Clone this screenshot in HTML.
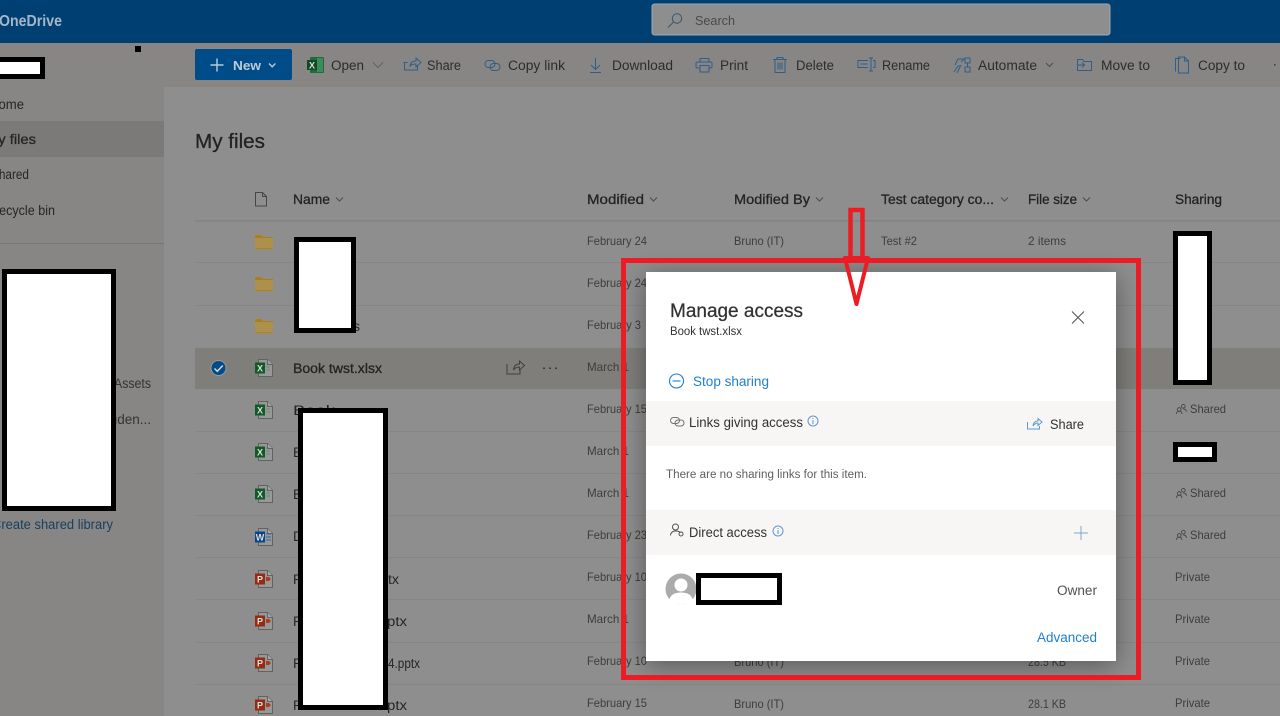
<!DOCTYPE html>
<html><head><meta charset="utf-8"><title>My files - OneDrive</title>
<style>
html,body{margin:0;padding:0;width:1280px;height:716px;overflow:hidden;background:#8e8e8e}
svg{display:block}
text{font-family:"Liberation Sans",sans-serif;font-size:13.5px;fill:#262525}
.m{stroke:#262525;stroke-width:.3}
.tb{fill:#2c2c2c}
.d{font-size:12px;fill:#3e3d3c}
.b{font-size:13.5px;fill:#242323;stroke:#242323;stroke-width:.3}
.i{fill:none;stroke:#2f5f88;stroke-width:1}
.g{fill:none;stroke:#404040;stroke-width:1}
.k{font-size:9px;font-weight:bold;fill:#ddd;text-anchor:middle}
.l{stroke:#868686;stroke-width:1}
.dt{fill:#323130}
.dg{fill:#605e5c}
.bl{fill:#1f80d0}
.di{fill:none;stroke:#5f98d2;stroke-width:1}
.r{fill:#fff;stroke:#000;stroke-width:5}
</style></head><body>
<svg width="1280" height="716" viewBox="0 0 1280 716" xmlns="http://www.w3.org/2000/svg">
<defs>
<filter id="sh" x="-20%" y="-20%" width="140%" height="140%"><feGaussianBlur stdDeviation="13"/></filter>
<symbol id="pg" viewBox="0 0 18 18"><path d="M3.500.5h9l5 5v12h-14z" fill="#989898" stroke="#626262"/><path d="M12.500.5v5h5" fill="#a8a8a8" stroke="#626262"/></symbol>
<symbol id="fo" viewBox="0 0 18 14"><path d="M0 1.500Q0 0 1.500 0H6l2 2h10v12H0z" fill="#ab8018"/><rect y="3" width="18" height="10.200" fill="#ad914a"/><rect y="13" width="18" height="1" fill="#bb7f12"/></symbol>
<symbol id="sr" viewBox="0 0 12 12"><circle cx="3.500" cy="6.500" r="2" fill="none" stroke="#484848"/><path d="M.5 11.500q0-3 3-3t3 3" fill="none" stroke="#484848"/><circle cx="8" cy="3" r="2" fill="none" stroke="#484848"/><path d="M8 6q3 0 3.500 3" fill="none" stroke="#484848"/></symbol>
</defs>

<!-- frame -->
<rect width="1280" height="716" fill="#8e8e8e"/>
<rect y="0" width="1280" height="43" fill="#003f72"/>
<rect y="43" width="164" height="673" fill="#878685"/>
<rect y="43" width="1280" height="44" fill="#878685"/>
<text x="-1" y="26" textLength="63" lengthAdjust="spacingAndGlyphs" style="font-size:15.500px;fill:#a3b7c8;font-weight:bold">OneDrive</text>

<!-- search -->
<rect x="652" y="4" width="458" height="31" rx="2.500" fill="#8e8e8e" stroke="#9ba8b4"/>
<circle cx="677" cy="18.500" r="4.700" fill="none" stroke="#34566f" stroke-width="1"/><path d="M673.500 22l-5.500 5.500" stroke="#34566f" fill="none"/>
<text x="695" y="25" textLength="40" lengthAdjust="spacingAndGlyphs" style="fill:#4a4a4a;font-size:13px">Search</text>

<!-- sidebar -->
<rect x="135" y="46" width="6" height="6" fill="#000"/>
<rect y="121" width="164" height="36" fill="#7b7a79"/>
<text x="-11" y="109" textLength="35" lengthAdjust="spacingAndGlyphs">Home</text>
<text x="-14" y="144" textLength="50" lengthAdjust="spacingAndGlyphs" class="m">My files</text>
<text x="-9" y="179" textLength="38" lengthAdjust="spacingAndGlyphs">Shared</text>
<text x="-10" y="215" textLength="65" lengthAdjust="spacingAndGlyphs">Recycle bin</text>
<rect y="243" width="164" height="1" fill="#787776"/>
<text x="114" y="388" textLength="37" lengthAdjust="spacingAndGlyphs" style="fill:#333">Assets</text>
<text x="97" y="424" textLength="54" lengthAdjust="spacingAndGlyphs" style="fill:#333">Studen...</text>
<text x="-8" y="529" textLength="121" lengthAdjust="spacingAndGlyphs" style="fill:#18405f">Create shared library</text>

<!-- toolbar -->
<rect x="195" y="49" width="97" height="31" rx="2" fill="#004c88"/>
<path d="M217 58.500v13M210.500 65h13" stroke="#bccbd8" stroke-width="1.400" fill="none"/>
<text x="233" y="70" textLength="28" lengthAdjust="spacingAndGlyphs" style="fill:#bccbd8;font-weight:bold;font-size:13px">New</text>
<path d="M269 63.500l3.200 3.200 3.200-3.200" stroke="#bccbd8" stroke-width="1.400" fill="none"/>

<rect x="310" y="57" width="14" height="16" rx="1" fill="#226a3e"/><rect x="317" y="58" width="6" height="14" fill="#3d8a5a"/>
<rect x="307" y="60" width="10" height="10" fill="#104a26"/><text x="312" y="68.500" class="k">X</text>
<text x="331" y="70" textLength="33" lengthAdjust="spacingAndGlyphs" class="tb">Open</text>
<path d="M373 62.500l5 5 5-5" fill="none" stroke="#636363"/>

<path class="i" d="M405 63v7.500h13V66M404 63h4M410.500 66.500q.5-5 6-5V58.500l5 4.500-5 4.500V64.500q-4 0-6 2z" transform="translate(-.5 -.5)"/>
<text x="427" y="70" textLength="34" lengthAdjust="spacingAndGlyphs" class="tb">Share</text>

<rect class="i" x="485" y="60.500" width="10" height="7" rx="3.500"/><rect class="i" x="490" y="63.500" width="10" height="7" rx="3.500"/>
<text x="508" y="70" textLength="57" lengthAdjust="spacingAndGlyphs" class="tb">Copy link</text>

<path class="i" d="M595.500 58v11M591 65l4.500 4.500L600 65M590 72.500h11"/>
<text x="612" y="70" textLength="61" lengthAdjust="spacingAndGlyphs" class="tb">Download</text>

<path class="i" d="M699 68h-2.500a1.500 1.500 0 0 1-1.500-1.500v-3a1.500 1.500 0 0 1 1.500-1.500h13a1.500 1.500 0 0 1 1.500 1.500v3a1.500 1.500 0 0 1-1.500 1.500H708M699 62v-3.500h9V62M699 65.500h9v6.500h-9z" transform="translate(1 0)"/>
<text x="720" y="70" textLength="28" lengthAdjust="spacingAndGlyphs" class="tb">Print</text>

<path class="i" d="M773 60h14M777 60v-2h6v2M775 60v13h10V60M778 63v7M780 63v7M782 63v7" transform="translate(0 -.5)"/>
<text x="796" y="70" textLength="38" lengthAdjust="spacingAndGlyphs" class="tb">Delete</text>

<path class="i" d="M868 60.500h-10v7h10M860.500 64h7M871 58v13M869 58h4M869 71h4M873 60.500h2v7h-2"/>
<text x="882" y="70" textLength="48" lengthAdjust="spacingAndGlyphs" class="tb">Rename</text>

<path class="i" d="M955 65l3-6h6l-3 3M954 72l4-6h3M961 65l-4 8M965 58h5v5h-5zM965 67h5v5h-5zM967.500 63v4"/>
<text x="978" y="70" textLength="59" lengthAdjust="spacingAndGlyphs" class="tb">Automate</text>
<path d="M1046 63l3.500 3.500 3.500-3.500" fill="none" stroke="#4c4c4c"/>

<path class="i" d="M1077.500 59.500h5l1.500 2h7.500v9h-14zM1077.500 65h7M1082 62.500l2.500 2.500-2.500 2.500"/>
<text x="1101" y="70" textLength="49" lengthAdjust="spacingAndGlyphs" class="tb">Move to</text>

<path class="i" d="M1175.500 72V59h5M1178.500 57.500h6l4 4v12h-10zM1184.500 57.500v4h4" transform="translate(0 -.5)"/>
<text x="1198" y="70" textLength="47" lengthAdjust="spacingAndGlyphs" class="tb">Copy to</text>
<rect x="1274" y="64" width="1.500" height="1.500" fill="#3c3c3c"/>

<!-- title -->
<text x="195" y="148" textLength="70" lengthAdjust="spacingAndGlyphs" style="font-size:20px;fill:#222;stroke:#222;stroke-width:.3">My files</text>

<!-- table header -->
<path d="M255.500 192.500h7l4 4v9.500h-11zM262.500 192.500v4h4" fill="none" stroke="#464646"/>
<text x="293" y="204" textLength="37" lengthAdjust="spacingAndGlyphs" class="b">Name</text>
<path d="M336 197.500l3.500 3.500 3.500-3.500" fill="none" stroke="#4c4c4c"/>
<text x="587" y="204" textLength="57" lengthAdjust="spacingAndGlyphs" class="b">Modified</text>
<path d="M650 197.500l3.500 3.500 3.500-3.500" fill="none" stroke="#4c4c4c"/>
<text x="734" y="204" textLength="76" lengthAdjust="spacingAndGlyphs" class="b">Modified By</text>
<path d="M816 197.500l3.500 3.500 3.500-3.500" fill="none" stroke="#4c4c4c"/>
<text x="881" y="204" textLength="113" lengthAdjust="spacingAndGlyphs" class="b">Test category co...</text>
<path d="M1001 197.500l3.500 3.500 3.500-3.500" fill="none" stroke="#4c4c4c"/>
<text x="1028" y="204" textLength="49" lengthAdjust="spacingAndGlyphs" class="b">File size</text>
<path d="M1083 197.500l3.500 3.500 3.500-3.500" fill="none" stroke="#4c4c4c"/>
<text x="1175" y="204" textLength="47" lengthAdjust="spacingAndGlyphs" class="b">Sharing</text>

<!-- row lines -->
<rect x="195" y="220" width="1085" height="1.500" fill="#838383"/>
<path class="l" d="M195 262.500H1280M195 305.500H1280M195 431.500H1280M195 473.500H1280M195 515.500H1280M195 557.500H1280M195 599.500H1280M195 642.500H1280M195 684.500H1280"/>
<rect x="195" y="348" width="1085" height="41" fill="#7f7e7a"/>

<!-- row icons -->
<use href="#fo" x="255" y="235" width="18" height="14"/>
<use href="#fo" x="255" y="277" width="18" height="14"/>
<use href="#fo" x="255" y="319" width="18" height="14"/>

<use href="#pg" x="255" y="359" width="18" height="18"/><rect x="255" y="362.500" width="10" height="11" fill="#105a28"/><text x="260" y="371.500" class="k">X</text>
<use href="#pg" x="255" y="401" width="18" height="18"/><rect x="255" y="404.500" width="10" height="11" fill="#105a28"/><text x="260" y="413.500" class="k">X</text>
<use href="#pg" x="255" y="443" width="18" height="18"/><rect x="255" y="446.500" width="10" height="11" fill="#105a28"/><text x="260" y="455.500" class="k">X</text>
<use href="#pg" x="255" y="485" width="18" height="18"/><rect x="255" y="488.500" width="10" height="11" fill="#105a28"/><text x="260" y="497.500" class="k">X</text>
<path d="M266.500 364h4M266.500 367h4M266.500 370h4M266.500 406h4M266.500 409h4M266.500 412h4M266.500 448h4M266.500 451h4M266.500 454h4M266.500 490h4M266.500 493h4M266.500 496h4" stroke="#4a7a5a" stroke-dasharray="1 1" fill="none"/>
<use href="#pg" x="255" y="528" width="18" height="18"/><rect x="255" y="531.500" width="10" height="11" fill="#0c4488"/><text x="260" y="540.500" class="k">W</text>
<path d="M266 534h5M266 537h5M266 540h5" stroke="#346aa5" fill="none"/>
<use href="#pg" x="255" y="570" width="18" height="18"/><rect x="255" y="573.500" width="10" height="11" fill="#942c13"/><text x="260" y="582.500" class="k">P</text>
<use href="#pg" x="255" y="612" width="18" height="18"/><rect x="255" y="615.500" width="10" height="11" fill="#942c13"/><text x="260" y="624.500" class="k">P</text>
<use href="#pg" x="255" y="654" width="18" height="18"/><rect x="255" y="657.500" width="10" height="11" fill="#942c13"/><text x="260" y="666.500" class="k">P</text>
<use href="#pg" x="255" y="696" width="18" height="18"/><rect x="255" y="699.500" width="10" height="11" fill="#942c13"/><text x="260" y="708.500" class="k">P</text>
<path d="M266 577h3l2 2-2 2h-3zM266 619h3l2 2-2 2h-3zM266 661h3l2 2-2 2h-3zM266 703h3l2 2-2 2h-3z" fill="#a24026"/>

<!-- selected row content -->
<circle cx="218.500" cy="368" r="8" fill="#989898"/><circle cx="218.500" cy="368" r="7" fill="#004c88"/>
<path d="M214.500 368.500l2.800 2.800 5.500-5.800" fill="none" stroke="#d5d5d5" stroke-width="1.500"/>
<text x="293" y="373" textLength="89" lengthAdjust="spacingAndGlyphs" class="b">Book twst.xlsx</text>
<path class="g" d="M507.500 364v10h13v-4M514 370q.5-6 6-6v-3l5 4.500-5 4.500v-3q-4 0-6 3z" transform="translate(-.5 0)"/>
<rect x="543" y="367.500" width="2" height="1.500" fill="#3c3c3c"/><rect x="549" y="367.500" width="2" height="1.500" fill="#3c3c3c"/><rect x="555" y="367.500" width="2" height="1.500" fill="#3c3c3c"/>

<!-- names -->
<text x="353" y="331" textLength="7" lengthAdjust="spacingAndGlyphs">s</text>
<text x="293" y="415" textLength="42" lengthAdjust="spacingAndGlyphs">Book</text>
<text x="293" y="457" textLength="10">B</text>
<text x="293" y="499" textLength="10">B</text>
<text x="293" y="541" textLength="10">D</text>
<text x="293" y="584" textLength="10">P</text><text x="388" y="584" textLength="11" lengthAdjust="spacingAndGlyphs">tx</text>
<text x="293" y="626" textLength="10">P</text><text x="387" y="626" textLength="20" lengthAdjust="spacingAndGlyphs">ptx</text>
<text x="293" y="668" textLength="10">P</text><text x="388" y="668" textLength="32" lengthAdjust="spacingAndGlyphs">4.pptx</text>
<text x="293" y="710" textLength="10">P</text><text x="387" y="710" textLength="20" lengthAdjust="spacingAndGlyphs">ptx</text>

<!-- dates -->
<text x="587" y="245" class="d" textLength="60" lengthAdjust="spacingAndGlyphs">February 24</text>
<text x="587" y="287" class="d" textLength="60" lengthAdjust="spacingAndGlyphs">February 24</text>
<text x="587" y="329" class="d" textLength="54" lengthAdjust="spacingAndGlyphs">February 3</text>
<text x="587" y="371" class="d" textLength="42" lengthAdjust="spacingAndGlyphs">March 1</text>
<text x="587" y="413" class="d" textLength="60" lengthAdjust="spacingAndGlyphs">February 15</text>
<text x="587" y="455" class="d" textLength="42" lengthAdjust="spacingAndGlyphs">March 1</text>
<text x="587" y="497" class="d" textLength="42" lengthAdjust="spacingAndGlyphs">March 1</text>
<text x="587" y="539" class="d" textLength="60" lengthAdjust="spacingAndGlyphs">February 23</text>
<text x="587" y="581" class="d" textLength="60" lengthAdjust="spacingAndGlyphs">February 10</text>
<text x="587" y="623" class="d" textLength="42" lengthAdjust="spacingAndGlyphs">March 1</text>
<text x="587" y="665" class="d" textLength="60" lengthAdjust="spacingAndGlyphs">February 10</text>
<text x="587" y="707" class="d" textLength="60" lengthAdjust="spacingAndGlyphs">February 15</text>

<!-- other columns -->
<text x="734" y="245" class="d" textLength="50" lengthAdjust="spacingAndGlyphs">Bruno (IT)</text>
<text x="881" y="245" class="d" textLength="36" lengthAdjust="spacingAndGlyphs">Test #2</text>
<text x="1028" y="245" class="d" textLength="38" lengthAdjust="spacingAndGlyphs">2 items</text>
<text x="734" y="666" class="d" textLength="50" lengthAdjust="spacingAndGlyphs">Bruno (IT)</text>
<text x="1028" y="666" class="d" textLength="38" lengthAdjust="spacingAndGlyphs">28.5 KB</text>
<text x="734" y="708" class="d" textLength="50" lengthAdjust="spacingAndGlyphs">Bruno (IT)</text>
<text x="1028" y="708" class="d" textLength="38" lengthAdjust="spacingAndGlyphs">28.1 KB</text>

<!-- sharing -->
<use href="#sr" x="1176" y="403" width="11" height="12"/><text x="1190" y="413" class="d" textLength="36" lengthAdjust="spacingAndGlyphs">Shared</text>
<use href="#sr" x="1176" y="487" width="11" height="12"/><text x="1190" y="497" class="d" textLength="36" lengthAdjust="spacingAndGlyphs">Shared</text>
<use href="#sr" x="1176" y="529" width="11" height="12"/><text x="1190" y="539" class="d" textLength="36" lengthAdjust="spacingAndGlyphs">Shared</text>
<text x="1175" y="581" class="d" textLength="35" lengthAdjust="spacingAndGlyphs">Private</text>
<text x="1175" y="623" class="d" textLength="35" lengthAdjust="spacingAndGlyphs">Private</text>
<text x="1175" y="665" class="d" textLength="35" lengthAdjust="spacingAndGlyphs">Private</text>
<text x="1175" y="707" class="d" textLength="35" lengthAdjust="spacingAndGlyphs">Private</text>

<!-- redactions under the dialog layer -->
<rect x="-5" y="59.500" width="47.500" height="17" class="r"/>
<rect x="296.500" y="239.500" width="57" height="91" class="r"/>
<rect x="300.500" y="410.500" width="85" height="297" class="r"/>
<rect x="4.500" y="271.500" width="109" height="237" class="r"/>
<rect x="1175.500" y="233.500" width="34" height="149" class="r"/>
<rect x="1175.500" y="444.500" width="39" height="15" class="r"/>

<!-- dialog -->
<rect x="646" y="276" width="470" height="389" fill="#000" opacity=".38" filter="url(#sh)"/>
<rect x="646" y="272" width="470" height="389" fill="#fff"/>
<text x="670" y="317" textLength="133" lengthAdjust="spacingAndGlyphs" class="dt" style="font-size:19px;stroke:#323130;stroke-width:.25">Manage access</text>
<text x="670" y="335" textLength="72" lengthAdjust="spacingAndGlyphs" class="dt" style="font-size:11.500px">Book twst.xlsx</text>
<path d="M1072 311.500l12 12M1084 311.500l-12 12" stroke="#505050" fill="none"/>

<circle cx="676.500" cy="381" r="7" fill="none" stroke="#1f80d0" stroke-width="1.100"/><path d="M672.500 381h8" stroke="#1f80d0" stroke-width="1.100"/>
<text x="693" y="386" textLength="76" lengthAdjust="spacingAndGlyphs" class="bl">Stop sharing</text>

<rect x="646" y="401" width="470" height="45" fill="#f7f6f4"/>
<rect x="670.500" y="417.500" width="9" height="6" rx="3" fill="none" stroke="#727272"/><rect x="675" y="420" width="9" height="6" rx="3" fill="none" stroke="#727272"/>
<text x="689" y="427" textLength="114" lengthAdjust="spacingAndGlyphs" class="dt">Links giving access</text>
<circle cx="813" cy="421" r="5" class="di"/><path d="M813 420v4M813 418v1" stroke="#5a96d3" fill="none"/>
<path class="di" d="M1027.500 422v7h12v-3M1033 426q.5-5 5-5v-2.500l4 3.500-4 3.500V423q-3 0-5 3z"/>
<text x="1050" y="429" textLength="34" lengthAdjust="spacingAndGlyphs" class="dt">Share</text>

<text x="666" y="478" textLength="201" lengthAdjust="spacingAndGlyphs" class="dg" style="font-size:11.500px">There are no sharing links for this item.</text>

<rect x="646" y="510" width="470" height="45" fill="#f7f6f4"/>
<circle cx="675.500" cy="527" r="3" fill="none" stroke="#505050"/><path d="M670.500 535.500q.5-4.500 5-4.500t4.500 2" fill="none" stroke="#505050"/><circle cx="681" cy="534" r="2" fill="none" stroke="#505050"/>
<text x="689" y="537" textLength="78" lengthAdjust="spacingAndGlyphs" class="dt">Direct access</text>
<circle cx="778" cy="531" r="5" class="di"/><path d="M778 530v4M778 528v1" stroke="#5a96d3" fill="none"/>
<path d="M1081 526v14M1074 533h14" stroke="#7aa8d6" fill="none"/>

<circle cx="681" cy="589" r="15.500" fill="#ababab"/>
<circle cx="681" cy="585" r="6.500" fill="#fff"/>
<path d="M669 600q2-7.500 12-7.500t12 7.500q-5 4.500-12 4.500t-12-4.500z" fill="#fff"/>
<rect x="698.500" y="575.500" width="81" height="27" class="r"/>
<text x="1057" y="595" textLength="40" lengthAdjust="spacingAndGlyphs" style="fill:#505050">Owner</text>
<text x="1037" y="642" textLength="60" lengthAdjust="spacingAndGlyphs" class="bl">Advanced</text>

<!-- red annotations -->
<rect x="623.500" y="260.500" width="515" height="417" fill="none" stroke="#ed1c24" stroke-width="5"/>
<path d="M850.500 258V210h12v48" fill="none" stroke="#ed1c24" stroke-width="4.500"/>
<path d="M845 258h23l-11.500 46z" fill="none" stroke="#ed1c24" stroke-width="4" stroke-linejoin="round"/>
</svg>
</body></html>
